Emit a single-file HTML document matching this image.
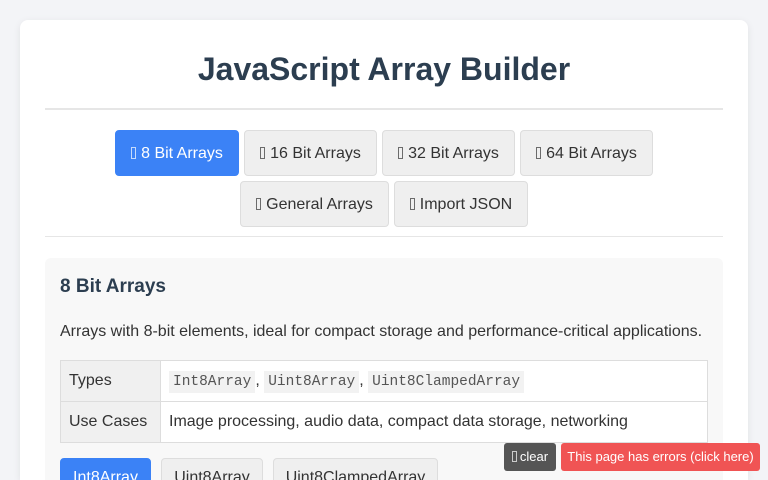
<!DOCTYPE html>
<html style="height:480px;overflow:hidden"><head><meta charset="utf-8"><style>
body{margin:0;background:#f3f4f7;font-family:"Liberation Sans",sans-serif;color:#333;width:768px;height:480px;overflow:hidden;position:relative}
.c{position:absolute;left:20px;top:20px;width:728px;height:460px;background:#fff;border-radius:8px 8px 0 0;box-shadow:0 2px 8px rgba(0,0,0,.08);overflow:hidden}
h1{margin:0;position:absolute;top:31px;left:0;width:728px;text-align:center;font-size:32px;color:#2c3e50;font-weight:bold}
.hr{position:absolute;left:25px;width:678px;height:2px;background:#e6e6e6}
.b{position:absolute;height:44px;border:1px solid #ddd;background:#efefef;border-radius:4px;font-size:16px;line-height:46px;text-align:center;color:#333;box-sizing:content-box}
.b.a{background:#3b82f6;border-color:#3b82f6;color:#fff}
.i{display:inline-block;width:3px;height:10px;border:1px solid currentColor;opacity:.7;margin-right:5px;vertical-align:-1px}
.p{position:absolute;left:25px;top:238px;width:678px;height:260px;background:#f8f8f8;border-radius:6px}
h3{position:absolute;margin:0;left:15px;top:18px;font-size:19px;color:#2c3e50}
.t{position:absolute;left:15px;top:65px;font-size:16px;color:#333}
table{position:absolute;left:15px;top:102px;width:648px;border-collapse:collapse;font-size:16px}
td{border:1px solid #ddd;height:40px;padding:0 8px;background:#fff}
td.k{background:#f0f0f0;width:83px}
code{font-family:"Liberation Mono",monospace;font-size:14.5px;background:#f2f2f2;padding:3px 4px;color:#555}
.s{position:absolute;top:200px;height:36px;line-height:38px;font-size:16px;border-radius:4px;border:1px solid #ddd;background:#efefef;text-align:center}
.e{position:absolute;top:443px;height:28px;line-height:28px;font-size:13px;color:#fff;border-radius:3px;text-align:center}
</style></head><body>
<div class="c">
<h1>JavaScript Array Builder</h1>
<div class="hr" style="top:88px"></div>
<div class="b a" style="left:95px;top:110px;width:122px"><span class="i"></span>8 Bit Arrays</div>
<div class="b" style="left:224px;top:110px;width:131px"><span class="i"></span>16 Bit Arrays</div>
<div class="b" style="left:362px;top:110px;width:131px"><span class="i"></span>32 Bit Arrays</div>
<div class="b" style="left:500px;top:110px;width:131px"><span class="i"></span>64 Bit Arrays</div>
<div class="b" style="left:220px;top:161px;width:147px"><span class="i"></span>General Arrays</div>
<div class="b" style="left:374px;top:161px;width:132px"><span class="i"></span>Import JSON</div>
<div class="hr" style="top:216px;height:1px"></div>
<div class="p">
<h3>8 Bit Arrays</h3>
<div class="t">Arrays with 8-bit elements, ideal for compact storage and performance-critical applications.</div>
<table><tr><td class="k">Types</td><td><code>Int8Array</code>, <code>Uint8Array</code>, <code>Uint8ClampedArray</code></td></tr>
<tr><td class="k">Use Cases</td><td>Image processing, audio data, compact data storage, networking</td></tr></table>
<div class="s" style="left:15px;width:89px;background:#3b82f6;border-color:#3b82f6;color:#fff">Int8Array</div>
<div class="s" style="left:116px;width:100px">Uint8Array</div>
<div class="s" style="left:228px;width:163px">Uint8ClampedArray</div>
</div>
</div>
<div class="e" style="left:504px;width:52px;background:#555"><span class="i" style="height:9px;margin-right:3px"></span>clear</div>
<div class="e" style="left:561px;width:199px;background:#f05454">This page has errors (click here)</div>
</body></html>
